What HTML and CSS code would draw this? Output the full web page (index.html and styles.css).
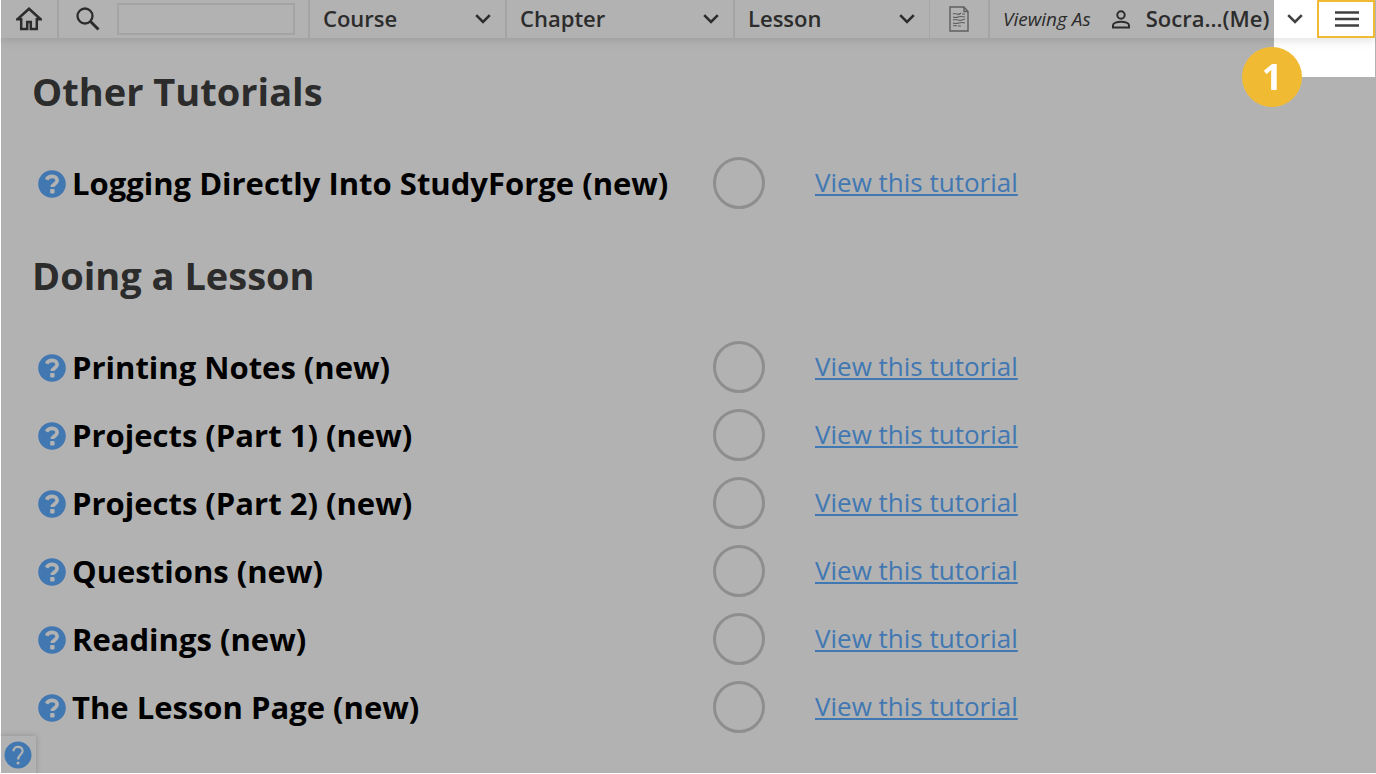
FILE: index.html
```html
<!DOCTYPE html>
<html lang="en">
<head>
  <meta charset="UTF-8">
  <title>StudyForge Tutorials</title>
  <link rel="stylesheet" href="styles.css">
</head>
<body>
  <!-- shared icons -->
  <svg class="sprite" aria-hidden="true">
    <symbol id="chevron" viewBox="0 0 16 10">
      <path d="M1.200 1.200 8 8l6.800-6.800" fill="none" stroke="currentColor" stroke-width="2.600"/>
    </symbol>
    <symbol id="question" viewBox="0 0 27 27">
      <circle cx="13.500" cy="13.500" r="13.300" fill="#5eadff"/>
      <path d="M8.200 9.300C9.600 6.900 11.300 6.200 13.700 6.200c2.700 0 4.700 1.500 4.700 3.900 0 3.600-4.600 3.300-4.600 6.400" fill="none" stroke="#fff" stroke-width="3.600"/>
      <rect x="11.700" y="18.300" width="4.300" height="4.300" rx="1" fill="#fff"/>
    </symbol>
  </svg>

  <header class="toolbar">
    <a class="cell home" href="#" aria-label="Home">
      <svg width="26" height="24" viewBox="0 0 26 24"><path d="M1.500 12.200 13 1.800l11.500 10.400h-3.700V22h-6v-7h-3.600v7h-6v-9.800z" fill="none" stroke="currentColor" stroke-width="2.500"/></svg>
    </a>
    <div class="cell search">
      <label for="search" aria-label="Search">
        <svg width="24" height="24" viewBox="0 0 24 24"><circle cx="9" cy="9" r="7.500" fill="none" stroke="currentColor" stroke-width="2.300"/><path d="m14.500 14.500 8 8" stroke="currentColor" stroke-width="3"/></svg>
      </label>
      <input id="search" type="text">
    </div>
    <div class="cell picker course">
      <select aria-label="Course"><option>Course</option></select>
      <svg class="chevron"><use href="#chevron"/></svg>
    </div>
    <div class="cell picker chapter">
      <select aria-label="Chapter"><option>Chapter</option></select>
      <svg class="chevron"><use href="#chevron"/></svg>
    </div>
    <div class="cell picker lesson">
      <select aria-label="Lesson"><option>Lesson</option></select>
      <svg class="chevron"><use href="#chevron"/></svg>
    </div>
    <button class="cell notes" type="button" aria-label="Notes">
      <svg width="20" height="26" viewBox="0 0 20 26" fill="none" stroke="#888"><path d="M1 1h14l4 4.500V25H1zM15 1v4.500h4" stroke-width="1.400"/><path d="M4 8q2-1 4 0t4-1M13 8h3M4 11q3 1 5 0t7 0M4 14q2-1 5 0t7-1M4 17q3 1 6 0t6 0M4 20q2-1 4 0M9 20h3" stroke-width="1.200"/></svg>
    </button>
    <div class="user">
      <span class="viewing">Viewing As</span>
      <svg width="18" height="19" viewBox="0 0 18 19" fill="none" stroke="currentColor" stroke-width="2"><circle cx="9" cy="5" r="3.700"/><path d="M1 17.500v-2.300c0-2 4-3.500 8-3.500s8 1.500 8 3.500v2.300z"/></svg>
      <div class="picker account">
        <select aria-label="Viewing as"><option>Socra...(Me)</option></select>
        <svg class="chevron"><use href="#chevron"/></svg>
      </div>
    </div>
    <button class="menu" type="button" aria-label="Menu">
      <svg width="26" height="16" viewBox="0 0 26 16"><path d="M2 1.500h24M2 8h24M2 14.500h24" stroke="currentColor" stroke-width="2.400"/></svg>
    </button>
  </header>

  <main>
    <section>
      <h2>Other Tutorials</h2>
      <div class="row">
        <h3><svg class="help"><use href="#question"/></svg>Logging Directly Into StudyForge (new)</h3>
        <input type="checkbox" aria-label="Logging Directly Into StudyForge done">
        <a href="#">View this tutorial</a>
      </div>
    </section>

    <section>
      <h2>Doing a Lesson</h2>
      <div class="row">
        <h3><svg class="help"><use href="#question"/></svg>Printing Notes (new)</h3>
        <input type="checkbox" aria-label="Printing Notes done">
        <a href="#">View this tutorial</a>
      </div>
      <div class="row">
        <h3><svg class="help"><use href="#question"/></svg>Projects (Part 1) (new)</h3>
        <input type="checkbox" aria-label="Projects (Part 1) done">
        <a href="#">View this tutorial</a>
      </div>
      <div class="row">
        <h3><svg class="help"><use href="#question"/></svg>Projects (Part 2) (new)</h3>
        <input type="checkbox" aria-label="Projects (Part 2) done">
        <a href="#">View this tutorial</a>
      </div>
      <div class="row">
        <h3><svg class="help"><use href="#question"/></svg>Questions (new)</h3>
        <input type="checkbox" aria-label="Questions done">
        <a href="#">View this tutorial</a>
      </div>
      <div class="row">
        <h3><svg class="help"><use href="#question"/></svg>Readings (new)</h3>
        <input type="checkbox" aria-label="Readings done">
        <a href="#">View this tutorial</a>
      </div>
      <div class="row">
        <h3><svg class="help"><use href="#question"/></svg>The Lesson Page (new)</h3>
        <input type="checkbox" aria-label="The Lesson Page done">
        <a href="#">View this tutorial</a>
      </div>
    </section>
  </main>

  <button class="help-tab" type="button" aria-label="Help">
    <svg width="28" height="28" viewBox="0 0 28 28"><circle cx="14" cy="14" r="13.500" fill="#5eadff"/><path d="M9.500 10.200c0-2.700 2-4.400 4.500-4.400s4.600 1.600 4.600 4.200c0 3.500-4.500 3.700-4.500 8.500" fill="none" stroke="#fff" stroke-width="2.200"/><circle cx="14.100" cy="22" r="1.600" fill="#fff"/></svg>
  </button>

  <!-- tour: dims the page except the menu corner -->
  <div class="tour">
    <div class="spotlight"></div>
    <div class="step">1</div>
  </div>
</body>
</html>
```
FILE: styles.css
```css
* { box-sizing: border-box; }
body {
  margin: 0;
  min-height: 100vh;
  background: #fff;
  color: #404040;
  font-family: "Open Sans", sans-serif;
}
.sprite { display: none; }

/* top bar */
.toolbar {
  display: flex;
  height: 38px;
  background: #fff;
  box-shadow: 0 2px 10px rgba(0, 0, 0, 0.13);
}
.cell {
  display: flex;
  align-items: center;
  border: 0 solid #ebebeb;
  border-right-width: 2px;
  background: none;
  color: inherit;
}
.home { flex: 0 0 59px; justify-content: center; }
.search { flex: 0 1 251px; gap: 17px; min-width: 0; padding: 0 13px 0 17px; }
.search label { display: flex; }
.search input {
  flex: 1;
  min-width: 0;
  height: 32px;
  border: 2px solid #ebebeb;
  background: #fff;
}
.picker { padding: 0 14px 0 13px; }
.course { flex: 0 1 197px; }
.chapter { flex: 0 1 228px; }
.lesson { flex: 0 1 195px; border-right-width: 1px; }
select {
  flex: 1;
  min-width: 0;
  padding: 0 0 2px;
  border: 0;
  background: none;
  color: inherit;
  font: 600 22px/30px "Open Sans", sans-serif;
  appearance: none;
}
.chevron { flex: none; width: 16px; height: 10px; }
.notes { flex: 0 0 60px; justify-content: center; padding: 0; }
.user {
  flex: 1;
  display: flex;
  align-items: center;
  padding-left: 13px;
}
.viewing { margin-right: 21px; font-size: 19px; font-style: italic; white-space: nowrap; }
.account {
  flex: 1;
  display: flex;
  align-items: center;
  padding-left: 16px;
}
.menu {
  flex: 0 0 58px;
  display: flex;
  align-items: center;
  justify-content: center;
  margin-right: 1px;
  padding: 0;
  border: 2px solid #f0bb33;
  background: #fff;
  color: inherit;
}

/* tutorial list */
main { padding: 27px 32px 0; }
section { margin-bottom: 32px; }
h2 { margin: 0 0 32px; font-size: 38px; line-height: 52px; }
.row {
  display: grid;
  grid-template-columns: minmax(0, 681px) 102px 1fr;
  align-items: center;
  height: 68px;
}
h3 {
  display: flex;
  align-items: center;
  gap: 6px;
  margin: 0;
  padding-left: 6px;
  color: #000;
  font-size: 31px;
  line-height: 42px;
}
.help { flex: none; width: 28px; height: 28px; margin-top: 2px; }
.row input {
  width: 52px;
  height: 52px;
  margin: 0;
  border: 3px solid #ccc;
  border-radius: 50%;
  appearance: none;
}
.row a { padding-bottom: 2px; color: #5eadff; font-size: 26px; line-height: 36px; }

.help-tab {
  position: fixed;
  left: 0;
  bottom: 0;
  display: flex;
  padding: 5px 4px;
  border: 0;
  background: #fff;
  box-shadow: 0 0 6px rgba(0, 0, 0, 0.2);
}

/* tour overlay */
.tour {
  position: fixed;
  inset: 0 0 1px 1px;
  overflow: hidden;
  pointer-events: none;
}
.spotlight {
  position: absolute;
  top: 0;
  right: 1px;
  width: 101px;
  height: 77px;
  box-shadow: 0 0 0 9999px rgba(0, 0, 0, 0.3);
}
.step {
  position: absolute;
  top: 47px;
  right: 74px;
  width: 60px;
  height: 60px;
  border-radius: 50%;
  background: #f0bb33;
  color: #fff;
  font-size: 36px;
  font-weight: bold;
  line-height: 60px;
  text-align: center;
}
```
